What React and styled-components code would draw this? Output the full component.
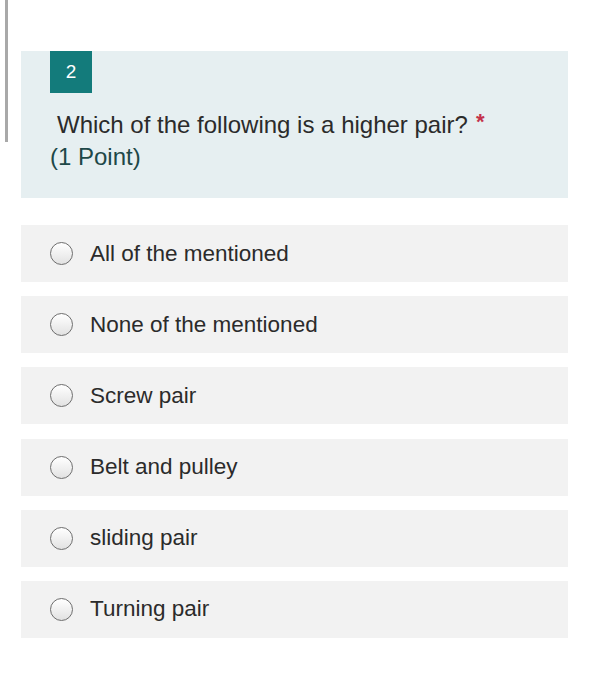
import styled, { createGlobalStyle } from "styled-components"

const Global = createGlobalStyle`
  body {
    margin: 0;
    background: #fff;
    font-family: "Liberation Sans", Arial, sans-serif;
  }
`

const Page = styled.div`
  position: relative;
  padding: 51px 21px 40px 21px;
`
const ScrollMark = styled.div`
  position: absolute;
  left: 5px;
  top: 0;
  width: 3px;
  height: 142px;
  background: #a9a9a9;
`
const Header = styled.div`
  background: #e6eff1;
  height: 147px;
  padding: 0 0 0 29px;
  box-sizing: border-box;
`
const Badge = styled.div`
  width: 42px;
  height: 42px;
  background: #137b7b;
  color: #fff;
  font-size: 19px;
  display: flex;
  align-items: center;
  justify-content: center;
`
const Question = styled.div`
  margin-top: 13px;
  padding-left: 7px;
  font-size: 24px;
  color: #2b2b2b;
  line-height: 32px;
`
const Star = styled.span`
  color: #c4314b;
  margin-left: 8px;
  font-size: 22px;
  font-weight: bold;
  vertical-align: 4px;
`
const Points = styled.div`
  font-size: 24px;
  line-height: 32px;
  color: #1e4848;
`
const Options = styled.div`
  margin-top: 27px;
  display: flex;
  flex-direction: column;
  gap: 14.2px;
`
const Option = styled.label`
  height: 57px;
  background: #f2f2f2;
  display: flex;
  align-items: center;
  padding-left: 29px;
  gap: 17px;
  font-size: 22.5px;
  color: #2b2b2b;
`
const Radio = styled.span`
  width: 23px;
  height: 23px;
  box-sizing: border-box;
  border-radius: 50%;
  border: 1.5px solid #6e6e6e;
  background: linear-gradient(#ffffff, #e2e2e2);
  flex-shrink: 0;
`

const choices = [
  "All of the mentioned",
  "None of the mentioned",
  "Screw pair",
  "Belt and pulley",
  "sliding pair",
  "Turning pair",
]

const App = () => {
  return (
    <Page>
      <Global />
      <ScrollMark />
      <Header>
        <Badge>2</Badge>
        <Question>
          Which of the following is a higher pair?<Star>*</Star>
        </Question>
        <Points>(1 Point)</Points>
      </Header>
      <Options>
        {choices.map((c) => (
          <Option key={c}>
            <Radio />
            {c}
          </Option>
        ))}
      </Options>
    </Page>
  )
}

export default App
